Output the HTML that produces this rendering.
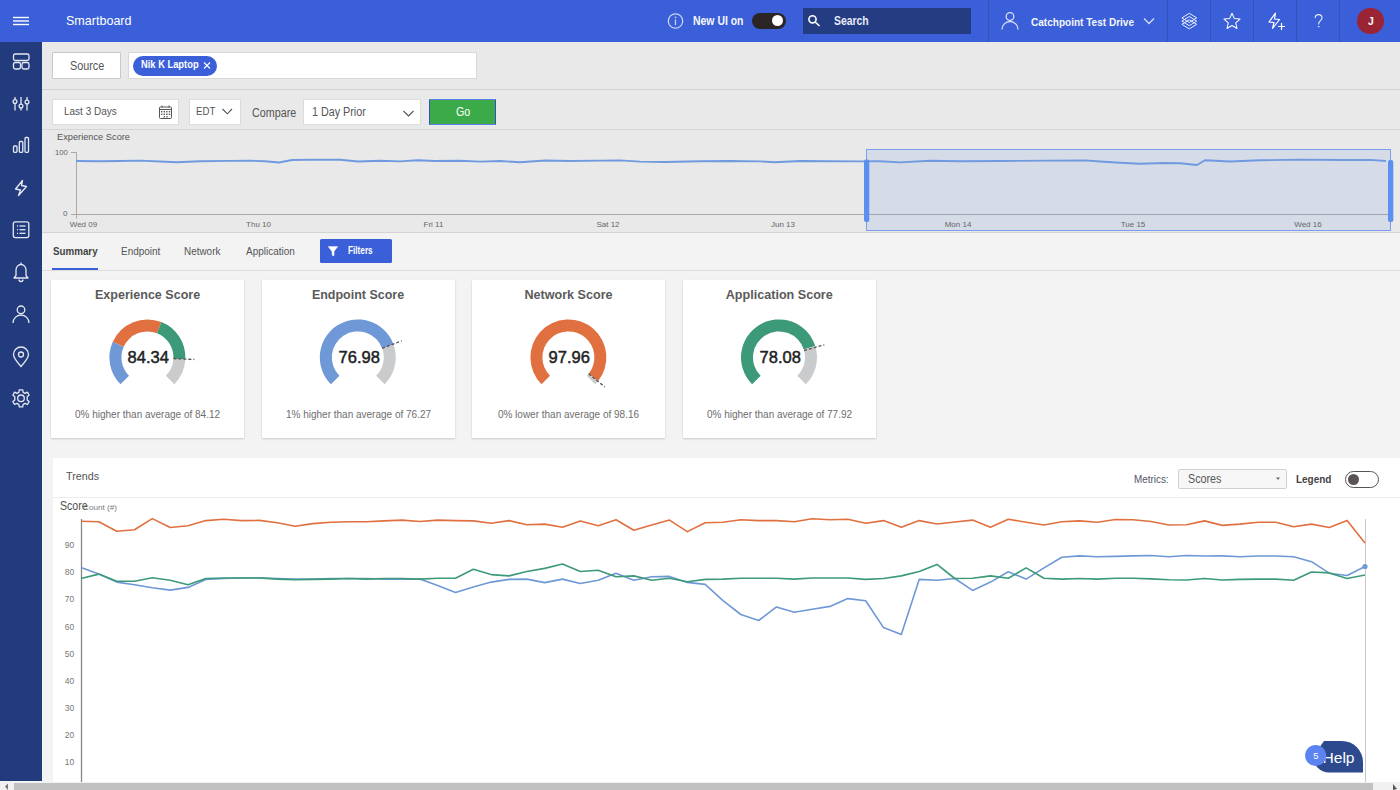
<!DOCTYPE html>
<html><head><meta charset="utf-8"><title>Smartboard</title>
<style>
html,body{margin:0;padding:0;width:1400px;height:790px;overflow:hidden;background:#f2f2f2;font-family:"Liberation Sans",sans-serif;}
.t{position:absolute;white-space:pre;line-height:1;font-family:"Liberation Sans",sans-serif;}
.b{position:absolute;box-sizing:border-box;}
svg{position:absolute;left:0;top:0;overflow:visible;}
</style></head><body>

<!-- header -->
<div class="b" style="left:0;top:0;width:1400px;height:42px;background:#3a5fd8;"></div>
<!-- sidebar -->
<div class="b" style="left:0;top:42px;width:42px;height:739px;background:#213b7d;"></div>
<!-- filter rows -->
<div class="b" style="left:42px;top:42px;width:1358px;height:191px;background:#e9e9e9;"></div>
<div class="b" style="left:42px;top:89px;width:1358px;height:1px;background:#d2d2d2;"></div>
<div class="b" style="left:42px;top:129px;width:1358px;height:1px;background:#d6d6d6;"></div>
<div class="b" style="left:42px;top:232px;width:1358px;height:1px;background:#d4d4d4;"></div>
<!-- tabs -->
<div class="b" style="left:42px;top:233px;width:1358px;height:549px;background:#f3f3f3;"></div>
<div class="b" style="left:42px;top:270px;width:1358px;height:1px;background:#dedede;"></div>
<div class="b" style="left:52px;top:268px;width:46px;height:2px;background:#3a5fd8;"></div>
<div class="b" style="left:319.5px;top:238.5px;width:72.5px;height:24.7px;background:#3a5fd8;border-radius:1.5px;"></div>

<!-- source / input -->
<div class="b" style="left:52px;top:52px;width:69px;height:27px;background:#fff;border:1px solid #c9c9c9;border-radius:1px;"></div>
<div class="b" style="left:128px;top:52px;width:349px;height:27px;background:#fff;border:1px solid #d8d8d8;"></div>
<div class="b" style="left:133px;top:56px;width:84px;height:20px;background:#3a5fd8;border-radius:10px;"></div>
<!-- date row -->
<div class="b" style="left:52px;top:99px;width:127px;height:26px;background:#fff;border:1px solid #dcdcdc;"></div>
<div class="b" style="left:189px;top:99px;width:52px;height:26px;background:#fff;border:1px solid #dcdcdc;"></div>
<div class="b" style="left:303px;top:99px;width:118px;height:26px;background:#fff;border:1px solid #dcdcdc;"></div>
<div class="b" style="left:429px;top:99px;width:67px;height:26px;background:#3aab48;border:1px solid #5b7ee8;border-left-color:#3050c8;border-right-color:#3050c8;border-radius:1px;"></div>

<!-- cards -->
<div class="b" style="left:51px;top:280px;width:193px;height:158px;background:#fff;box-shadow:0 1px 2px rgba(0,0,0,0.18);"></div>
<div class="b" style="left:262px;top:280px;width:193px;height:158px;background:#fff;box-shadow:0 1px 2px rgba(0,0,0,0.18);"></div>
<div class="b" style="left:472px;top:280px;width:193px;height:158px;background:#fff;box-shadow:0 1px 2px rgba(0,0,0,0.18);"></div>
<div class="b" style="left:683px;top:280px;width:193px;height:158px;background:#fff;box-shadow:0 1px 2px rgba(0,0,0,0.18);"></div>

<!-- trends panel -->
<div class="b" style="left:53px;top:458px;width:1347px;height:324px;background:#fff;"></div>
<div class="b" style="left:53px;top:497px;width:1347px;height:1px;background:#ececec;"></div>
<div class="b" style="left:1178px;top:469px;width:109px;height:20px;background:#f7f7f7;border:1px solid #d0d0d0;border-radius:2px;"></div>
<div class="b" style="left:1345px;top:471px;width:34px;height:17px;background:#fff;border:1px solid #555;border-radius:9px;"></div>
<div class="b" style="left:1348px;top:474px;width:11px;height:11px;background:#5a5358;border-radius:50%;"></div>

<!-- search box -->
<div class="b" style="left:803px;top:8px;width:168px;height:26px;background:#233c82;"></div>
<!-- toggle -->
<div class="b" style="left:752px;top:13px;width:34px;height:16px;background:#2b2526;border-radius:8px;"></div>
<div class="b" style="left:772px;top:15px;width:11px;height:11px;background:#fff;border-radius:50%;"></div>
<!-- avatar -->
<div class="b" style="left:1357.3px;top:7.6px;width:26.6px;height:26.6px;background:#9a2433;border-radius:50%;"></div>

<!-- scrollbar -->
<div class="b" style="left:0;top:782px;width:1400px;height:8px;background:#f1f1f1;"></div>
<div class="b" style="left:14px;top:783px;width:1359px;height:7px;background:#c1c1c1;"></div>

<svg width="1400" height="790" viewBox="0 0 1400 790">
  <!-- header icons -->
  <g stroke="#fff" stroke-width="1.4" fill="none">
    <line x1="13" y1="17.5" x2="29" y2="17.5"/><line x1="13" y1="21" x2="29" y2="21"/><line x1="13" y1="24.5" x2="29" y2="24.5"/>
  </g>
  <g stroke="#c9d4f2" stroke-width="1.3" fill="none">
    <circle cx="675.5" cy="21" r="7.2"/>
    <line x1="675.5" y1="19.5" x2="675.5" y2="25"/>
  </g>
  <circle cx="675.5" cy="17.3" r="0.9" fill="#c9d4f2"/>
  <!-- search icon -->
  <g stroke="#fff" stroke-width="1.6" fill="none">
    <circle cx="812.5" cy="19.3" r="3.6"/><line x1="815.2" y1="22" x2="819.5" y2="26"/>
  </g>
  <!-- separators -->
  <g stroke="#3253b8" stroke-width="1">
    <line x1="988.5" y1="0" x2="988.5" y2="42"/><line x1="1167.5" y1="0" x2="1167.5" y2="42"/>
    <line x1="1210.5" y1="0" x2="1210.5" y2="42"/><line x1="1253.5" y1="0" x2="1253.5" y2="42"/>
    <line x1="1296.5" y1="0" x2="1296.5" y2="42"/><line x1="1339.5" y1="0" x2="1339.5" y2="42"/>
  </g>
  <!-- user icon -->
  <g stroke="#d6def5" stroke-width="1.3" fill="none">
    <circle cx="1010" cy="16.5" r="3.8"/>
    <path d="M1002,29.5 A8,8 0 0 1 1018,29.5"/>
    <path d="M1144,18.5 L1149,23.5 L1154,18.5"/>
  </g>
  <!-- layers -->
  <g stroke="#eef1fb" stroke-width="1" fill="none" stroke-linejoin="round">
    <path d="M1189.3,13.3 L1196.7,17.9 L1189.3,22.5 L1181.9,17.9 Z"/>
    <path d="M1189.3,16.5 L1196.7,21.1 L1189.3,25.7 L1181.9,21.1 Z"/>
    <path d="M1189.3,19.7 L1196.7,24.3 L1189.3,28.9 L1181.9,24.3 Z"/>
  </g>
  <!-- star -->
  <path d="M1232,13.3 L1234.3,18.6 L1240,19.1 L1235.7,22.9 L1237,28.5 L1232,25.5 L1227,28.5 L1228.3,22.9 L1224,19.1 L1229.7,18.6 Z" stroke="#fff" stroke-width="1.05" fill="none" stroke-linejoin="round"/>
  <!-- bolt plus -->
  <g stroke="#fff" stroke-width="1.2" fill="none" stroke-linejoin="round">
    <path d="M1275.5,13 L1269,22 L1274,22.5 L1272.5,28.5 L1279.5,19.5 L1274.5,19 Z"/>
    <path d="M1281.5,23 L1281.5,30 M1278,26.5 L1285,26.5"/>
  </g>
  <!-- help ? -->
  <path d="M1315.2,18 C1315.2,15.6 1316.8,14.6 1318.5,14.6 C1320.4,14.6 1322,15.8 1322,18 C1322,20.3 1318.7,21 1318.7,23.6 L1318.7,24.4" stroke="#e8ecf8" stroke-width="1.1" fill="none"/><rect x="1317.9" y="26" width="1.6" height="1.2" fill="#e8ecf8"/>

  <!-- sidebar icons -->
  <g stroke="#e6e9f2" stroke-width="1.3" fill="none">
    <rect x="13.5" y="54" width="15.5" height="6.5" rx="1.8"/>
    <rect x="13.5" y="62.5" width="7" height="6.5" rx="1.8"/>
    <rect x="22" y="62.5" width="7" height="6.5" rx="1.8"/>
    <!-- sliders -->
    <line x1="15" y1="97" x2="15" y2="110.5"/><line x1="21" y1="97" x2="21" y2="110.5"/><line x1="27" y1="97" x2="27" y2="110.5"/>
    <circle cx="15" cy="101.5" r="1.9" fill="#213b7d"/><circle cx="21" cy="106" r="1.9" fill="#213b7d"/><circle cx="27" cy="102" r="1.9" fill="#213b7d"/>
    <!-- bars -->
    <rect x="13.5" y="146" width="3.5" height="6.3" rx="1"/>
    <rect x="19.3" y="141.5" width="3.5" height="10.8" rx="1"/>
    <rect x="25" y="137.5" width="3.5" height="14.8" rx="1"/>
    <!-- bolt -->
    <path d="M22.5,180.5 L15.5,189 L20.5,190 L18.5,195.5 L26.5,186.5 L21.5,185.5 Z" stroke-linejoin="round"/>
    <!-- list -->
    <rect x="13.3" y="221.8" width="15.5" height="15.8" rx="2"/>
    <line x1="17" y1="226" x2="18" y2="226"/><line x1="19.5" y1="226" x2="25.5" y2="226"/>
    <line x1="17" y1="229.7" x2="18" y2="229.7"/><line x1="19.5" y1="229.7" x2="25.5" y2="229.7"/>
    <line x1="17" y1="233.3" x2="18" y2="233.3"/><line x1="19.5" y1="233.3" x2="25.5" y2="233.3"/>
    <!-- bell -->
    <path d="M14,278 L16,275.5 L16,270 A5,5.5 0 0 1 26,270 L26,275.5 L28,278 Z" stroke-linejoin="round"/>
    <path d="M19,279.5 A2,2 0 0 0 23,279.5"/>
    <line x1="21" y1="262.5" x2="21" y2="264.5"/>
    <!-- user -->
    <circle cx="21" cy="309.8" r="3.8"/>
    <path d="M13,323 A8,8 0 0 1 29,323"/>
    <!-- pin -->
    <path d="M21,366.5 C17,362 13.5,357.5 13.5,354.5 A7.5,7.5 0 0 1 28.5,354.5 C28.5,357.5 25,362 21,366.5 Z"/>
    <circle cx="21" cy="354.5" r="2.5"/>
    <!-- gear -->
    <circle cx="21" cy="398.3" r="3.3"/>
    <path d="M19.3,389.8 L22.7,389.8 L23.2,392.3 L25.1,393.3 L27.4,392.1 L29.1,395 L27.2,396.7 L27.2,399.9 L29.1,401.6 L27.4,404.5 L25.1,403.3 L23.2,404.3 L22.7,406.8 L19.3,406.8 L18.8,404.3 L16.9,403.3 L14.6,404.5 L12.9,401.6 L14.8,399.9 L14.8,396.7 L12.9,395 L14.6,392.1 L16.9,393.3 L18.8,392.3 Z" stroke-linejoin="round"/>
  </g>

  <!-- chip x -->
  <g stroke="#fff" stroke-width="1.1"><line x1="204" y1="62.5" x2="210" y2="68.5"/><line x1="210" y1="62.5" x2="204" y2="68.5"/></g>
  <!-- calendar icon -->
  <g stroke="#555" stroke-width="1" fill="none">
    <rect x="159.5" y="107" width="12" height="11.5" rx="1"/>
    <line x1="159.5" y1="109.5" x2="171.5" y2="109.5"/>
    <line x1="162" y1="105.5" x2="162" y2="107.5"/><line x1="169" y1="105.5" x2="169" y2="107.5"/>
  </g>
  <g fill="#555">
    <rect x="161" y="111" width="1.4" height="1.4"/><rect x="163.6" y="111" width="1.4" height="1.4"/><rect x="166.2" y="111" width="1.4" height="1.4"/><rect x="168.8" y="111" width="1.4" height="1.4"/>
    <rect x="161" y="113.6" width="1.4" height="1.4"/><rect x="163.6" y="113.6" width="1.4" height="1.4"/><rect x="166.2" y="113.6" width="1.4" height="1.4"/><rect x="168.8" y="113.6" width="1.4" height="1.4"/>
    <rect x="163.6" y="116.1" width="1.4" height="1.4"/><rect x="166.2" y="116.1" width="1.4" height="1.4"/>
  </g>
  <g stroke="#555" stroke-width="1.1" fill="none">
    <path d="M222.5,109 L227.3,113.8 L232,109"/>
    <path d="M403.5,111 L408.5,116 L413.5,111"/>
  </g>
  <!-- filters funnel -->
  <path d="M328.2,246.6 L337.8,246.6 L334.2,251.2 L334,255.8 L332.3,255.5 L331.8,251.2 Z" fill="#fff" stroke="#fff" stroke-width="0.4" stroke-linejoin="round"/>
  <!-- dropdown caret -->
  <path d="M1276,477.5 L1280,477.5 L1278,480 Z" fill="#666"/>

  <!-- mini chart -->
  <g stroke="#a8a8a8" stroke-width="1" fill="none">
    <line x1="76.5" y1="152.5" x2="76.5" y2="218.5"/>
    <line x1="71" y1="152.5" x2="76.5" y2="152.5"/>
    <line x1="71" y1="214.5" x2="1390" y2="214.5"/>
  </g>
  <rect x="866.5" y="149.5" width="524" height="81" fill="rgba(120,150,230,0.16)" stroke="#7a9df0" stroke-width="1"/>
  <polyline points="76,161 100,161.3 120,161 140,160.6 160,161.5 177,162.3 200,161.2 230,160.9 250,160.7 265,161.2 279,162.5 292,160 320,159.6 340,159.8 358,161.5 380,160.8 400,161.4 418,160.3 435,161 460,160.8 480,161.6 500,161 520,162.2 545,160.5 570,161 600,160.6 620,160.4 640,161.6 665,162 700,161.3 730,161 760,161.4 775,162.3 800,161 830,161.2 860,161.4 880,161.2 900,162.4 930,160.8 960,161.2 1000,161 1050,160.6 1085,160.4 1100,161.5 1120,162.8 1140,163.8 1165,163 1180,163.2 1197,165 1205,160.2 1230,161.5 1260,160.3 1300,159.6 1340,160 1370,159.9 1386,161" fill="none" stroke="#6f9ae0" stroke-width="1.9" stroke-linejoin="round"/>
  <rect x="864" y="159.5" width="5.3" height="62.5" rx="2" fill="#5b8ff0"/>
  <rect x="1388" y="160" width="5.3" height="62" rx="2" fill="#5b8ff0"/>

  <path d="M120.53,384.27 A38,38 0 0 1 112.77,341.76 L123.70,346.70 A26,26 0 0 0 129.02,375.78 Z" fill="#6e98d6"/>
<path d="M112.77,341.76 A38,38 0 0 1 161.45,322.09 L157.01,333.24 A26,26 0 0 0 123.70,346.70 Z" fill="#e07040"/>
<path d="M161.45,322.09 A38,38 0 0 1 185.35,359.26 L173.37,358.67 A26,26 0 0 0 157.01,333.24 Z" fill="#3c9a78"/>
<path d="M185.35,359.26 A38,38 0 0 1 174.27,384.27 L165.78,375.78 A26,26 0 0 0 173.37,358.67 Z" fill="#c9cbcc"/>
<line x1="173.4" y1="358.6" x2="194.4" y2="359.5" stroke="#555" stroke-width="1.3" stroke-dasharray="3,2"/>
<path d="M330.93,384.27 A38,38 0 1 1 393.51,344.40 L382.23,348.51 A26,26 0 1 0 339.42,375.78 Z" fill="#6e98d6"/>
<path d="M393.51,344.40 A38,38 0 0 1 384.67,384.27 L376.18,375.78 A26,26 0 0 0 382.23,348.51 Z" fill="#c9cbcc"/>
<line x1="382.2" y1="348.3" x2="401.8" y2="340.9" stroke="#555" stroke-width="1.3" stroke-dasharray="3,2"/>
<path d="M541.53,384.27 A38,38 0 1 1 597.93,381.31 L588.61,373.76 A26,26 0 1 0 550.02,375.78 Z" fill="#e07040"/>
<path d="M597.93,381.31 A38,38 0 0 1 595.27,384.27 L586.78,375.78 A26,26 0 0 0 588.61,373.76 Z" fill="#c9cbcc"/>
<line x1="588.6" y1="373.8" x2="604.9" y2="387.0" stroke="#555" stroke-width="1.3" stroke-dasharray="3,2"/>
<path d="M752.13,384.27 A38,38 0 1 1 815.24,345.97 L803.80,349.58 A26,26 0 1 0 760.62,375.78 Z" fill="#3c9a78"/>
<path d="M815.24,345.97 A38,38 0 0 1 805.87,384.27 L797.38,375.78 A26,26 0 0 0 803.80,349.58 Z" fill="#c9cbcc"/>
<line x1="804.1" y1="350.5" x2="824.3" y2="344.8" stroke="#555" stroke-width="1.3" stroke-dasharray="3,2"/>

  <!-- trends chart -->
  <line x1="81.5" y1="519" x2="81.5" y2="782" stroke="#888" stroke-width="1.3"/>
  <line x1="1365.5" y1="519" x2="1365.5" y2="782" stroke="#c8c8c8" stroke-width="1"/>
  <polyline points="81.0,521.3 98.8,521.8 116.7,531.2 134.5,529.8 152.3,518.6 170.2,527.5 188.0,525.7 205.8,520.6 223.7,519.2 241.5,520.6 259.3,520.4 277.2,522.7 295.0,526.3 312.8,523.6 330.7,522.2 348.5,521.8 366.3,521.8 384.2,520.9 402.0,520.1 419.8,521.5 437.7,520.1 455.5,520.6 473.3,520.9 491.2,523.3 509.0,520.6 526.8,524.8 544.7,524.1 562.5,527.2 580.3,520.9 598.2,525.7 616.0,519.7 633.8,530.2 651.7,525.0 669.5,520.1 687.3,531.6 705.2,522.7 723.0,522.2 740.8,519.7 758.7,520.6 776.5,520.6 794.3,521.8 812.2,518.8 830.0,519.7 847.8,519.2 865.7,523.3 883.5,520.6 901.3,527.2 919.2,520.6 937.0,524.0 954.8,522.0 972.6,520.1 990.5,527.2 1008.3,519.2 1026.1,522.2 1044.0,525.0 1061.8,521.8 1079.6,520.9 1097.5,522.2 1115.3,519.5 1133.1,519.7 1151.0,521.5 1168.8,525.0 1186.6,524.8 1204.5,520.9 1222.3,525.4 1240.1,524.1 1258.0,522.2 1275.8,522.2 1293.6,526.8 1311.5,524.1 1329.3,527.5 1347.1,520.4 1365.0,543.1" fill="none" stroke="#e07040" stroke-width="1.6" stroke-linejoin="round"/>
  <polyline points="81.0,567.6 98.8,574.1 116.7,582.1 134.5,584.7 152.3,587.8 170.2,590.1 188.0,587.4 205.8,579.4 223.7,578.5 241.5,578.0 259.3,577.7 277.2,578.5 295.0,579.1 312.8,579.1 330.7,578.5 348.5,578.5 366.3,578.5 384.2,579.1 402.0,579.1 419.8,579.1 437.7,585.6 455.5,592.4 473.3,586.9 491.2,582.1 509.0,579.4 526.8,579.1 544.7,582.6 562.5,579.1 580.3,583.5 598.2,580.3 616.0,573.2 633.8,580.3 651.7,576.8 669.5,576.4 687.3,582.4 705.2,584.4 723.0,600.7 740.8,614.5 758.7,620.5 776.5,606.9 794.3,612.2 812.2,609.2 830.0,606.4 847.8,598.6 865.7,600.7 883.5,627.6 901.3,634.4 919.2,579.4 937.0,580.3 954.8,578.5 972.6,590.4 990.5,582.1 1008.3,571.8 1026.1,579.1 1044.0,567.9 1061.8,557.3 1079.6,555.9 1097.5,556.7 1115.3,556.4 1133.1,555.9 1151.0,555.5 1168.8,556.7 1186.6,555.5 1204.5,556.0 1222.3,555.9 1240.1,556.7 1258.0,556.0 1275.8,556.0 1293.6,556.7 1311.5,561.7 1329.3,573.2 1347.1,575.5 1365.0,566.5" fill="none" stroke="#6e98d6" stroke-width="1.6" stroke-linejoin="round"/>
  <polyline points="81.0,578.5 98.8,574.1 116.7,581.2 134.5,581.2 152.3,577.7 170.2,580.3 188.0,584.7 205.8,578.5 223.7,578.0 241.5,578.0 259.3,578.0 277.2,579.1 295.0,579.8 312.8,579.4 330.7,579.1 348.5,578.5 366.3,579.1 384.2,578.5 402.0,578.5 419.8,579.1 437.7,578.2 455.5,578.2 473.3,569.3 491.2,574.6 509.0,575.9 526.8,571.5 544.7,568.4 562.5,564.0 580.3,571.5 598.2,570.2 616.0,576.8 633.8,575.9 651.7,580.3 669.5,578.2 687.3,581.7 705.2,579.4 723.0,579.1 740.8,578.2 758.7,578.2 776.5,578.2 794.3,579.1 812.2,578.0 830.0,578.0 847.8,578.0 865.7,579.4 883.5,578.5 901.3,575.9 919.2,571.5 937.0,564.4 954.8,578.5 972.6,578.2 990.5,575.9 1008.3,578.2 1026.1,567.9 1044.0,578.2 1061.8,579.1 1079.6,578.5 1097.5,579.1 1115.3,578.2 1133.1,578.2 1151.0,578.9 1168.8,579.8 1186.6,580.0 1204.5,578.5 1222.3,580.0 1240.1,579.4 1258.0,579.1 1275.8,579.1 1293.6,580.3 1311.5,572.0 1329.3,572.9 1347.1,578.5 1365.0,575.0" fill="none" stroke="#3c9a78" stroke-width="1.6" stroke-linejoin="round"/>
  <circle cx="1365" cy="566.5" r="2.6" fill="#6e98d6"/>

  <!-- help button -->
  <path d="M1324,741 L1342,741 A21,21 0 0 1 1363,762 L1363,772.5 L1329,772.5 A16,16 0 0 1 1313,756.5 Z" fill="#2d4a8f"/>
  <text x="1322.5" y="763" font-family="Liberation Sans" font-size="15.5" fill="#fff" textLength="32" lengthAdjust="spacingAndGlyphs">Help</text>
  <circle cx="1315.7" cy="755.5" r="10.6" fill="#5b84f0"/>
  <text x="1315.8" y="758.8" font-family="Liberation Sans" font-size="9.5" font-weight="400" fill="#fff" text-anchor="middle">5</text>
  <path d="M5,786.5 L8,783.5 L8,790 Z" fill="#777"/><path d="M1393,784 L1397,789 L1393,790 Z" fill="#555"/>
</svg>

<span class="t" style="top:13.95px;font-size:13px;font-weight:400;color:#ffffff;left:66.00px;transform:scaleX(0.9643);transform-origin:left 0;">Smartboard</span>
<span class="t" style="top:15.40px;font-size:12px;font-weight:700;color:#f6f7fc;left:692.50px;transform:scaleX(0.8705);transform-origin:left 0;">New UI on</span>
<span class="t" style="top:14.80px;font-size:12px;font-weight:700;color:#e8ecf8;left:834.00px;transform:scaleX(0.8668);transform-origin:left 0;">Search</span>
<span class="t" style="top:15.54px;font-size:11.6px;font-weight:700;color:#f4f6fc;left:1031.40px;transform:scaleX(0.8658);transform-origin:left 0;">Catchpoint Test Drive</span>
<span class="t" style="top:16.08px;font-size:10.5px;font-weight:700;color:#ffffff;left:1367.50px;transform:scaleX(0.9925);transform-origin:left 0;">J</span>
<span class="t" style="top:60.10px;font-size:12px;font-weight:400;color:#555555;left:69.60px;transform:scaleX(0.9019);transform-origin:left 0;">Source</span>
<span class="t" style="top:59.25px;font-size:11px;font-weight:700;color:#ffffff;left:141.00px;transform:scaleX(0.8490);transform-origin:left 0;">Nik K Laptop</span>
<span class="t" style="top:106.35px;font-size:11px;font-weight:400;color:#555555;left:64.30px;transform:scaleX(0.9089);transform-origin:left 0;">Last 3 Days</span>
<span class="t" style="top:106.35px;font-size:11px;font-weight:400;color:#555555;left:196.40px;transform:scaleX(0.8773);transform-origin:left 0;">EDT</span>
<span class="t" style="top:107.10px;font-size:12px;font-weight:400;color:#555555;left:251.50px;transform:scaleX(0.8955);transform-origin:left 0;">Compare</span>
<span class="t" style="top:106.20px;font-size:12px;font-weight:400;color:#555555;left:311.50px;transform:scaleX(0.8962);transform-origin:left 0;">1 Day Prior</span>
<span class="t" style="top:106.10px;font-size:12px;font-weight:400;color:#ffffff;left:455.80px;transform:scaleX(0.8929);transform-origin:left 0;">Go</span>
<span class="t" style="top:132.35px;font-size:9.7px;font-weight:400;color:#555555;left:56.50px;transform:scaleX(0.9546);transform-origin:left 0;">Experience Score</span>
<span class="t" style="top:148.50px;font-size:8px;font-weight:400;color:#666666;left:55.00px;transform:scaleX(0.9656);transform-origin:left 0;">100</span>
<span class="t" style="top:210.40px;font-size:8px;font-weight:400;color:#666666;left:63.00px;transform:scaleX(1.0105);transform-origin:left 0;">0</span>
<span class="t" style="top:220.50px;font-size:8px;font-weight:400;color:#666666;left:69.78px;">Wed 09</span>
<span class="t" style="top:220.50px;font-size:8px;font-weight:400;color:#666666;left:246.05px;">Thu 10</span>
<span class="t" style="top:220.50px;font-size:8px;font-weight:400;color:#666666;left:423.57px;">Fri 11</span>
<span class="t" style="top:220.50px;font-size:8px;font-weight:400;color:#666666;left:596.43px;">Sat 12</span>
<span class="t" style="top:220.50px;font-size:8px;font-weight:400;color:#666666;left:770.98px;">Jun 13</span>
<span class="t" style="top:220.50px;font-size:8px;font-weight:400;color:#666666;left:944.66px;">Mon 14</span>
<span class="t" style="top:220.50px;font-size:8px;font-weight:400;color:#666666;left:1120.70px;">Tue 15</span>
<span class="t" style="top:220.50px;font-size:8px;font-weight:400;color:#666666;left:1294.28px;">Wed 16</span>
<span class="t" style="top:245.75px;font-size:11px;font-weight:700;color:#444444;left:53.30px;transform:scaleX(0.8895);transform-origin:left 0;">Summary</span>
<span class="t" style="top:245.75px;font-size:11px;font-weight:400;color:#555555;left:120.70px;transform:scaleX(0.9047);transform-origin:left 0;">Endpoint</span>
<span class="t" style="top:245.75px;font-size:11px;font-weight:400;color:#555555;left:184.30px;transform:scaleX(0.9022);transform-origin:left 0;">Network</span>
<span class="t" style="top:245.75px;font-size:11px;font-weight:400;color:#555555;left:245.70px;transform:scaleX(0.9066);transform-origin:left 0;">Application</span>
<span class="t" style="top:245.84px;font-size:10.3px;font-weight:700;color:#ffffff;left:348.30px;transform:scaleX(0.7992);transform-origin:left 0;">Filters</span>
<span class="t" style="top:288.35px;font-size:13px;font-weight:700;color:#5a5a5a;left:92.94px;transform:scaleX(0.9640);transform-origin:center 0;">Experience Score</span>
<span class="t" style="top:349.25px;font-size:17px;font-weight:400;color:#222222;left:126.53px;-webkit-text-stroke:0.5px #222222;transform:scaleX(0.9707);transform-origin:center 0;">84.34</span>
<span class="t" style="top:409.80px;font-size:10px;font-weight:400;color:#6e6e6e;left:74.95px;">0% higher than average of 84.12</span>
<span class="t" style="top:288.35px;font-size:13px;font-weight:700;color:#5a5a5a;left:310.47px;transform:scaleX(0.9598);transform-origin:center 0;">Endpoint Score</span>
<span class="t" style="top:349.25px;font-size:17px;font-weight:400;color:#222222;left:337.53px;-webkit-text-stroke:0.5px #222222;transform:scaleX(0.9707);transform-origin:center 0;">76.98</span>
<span class="t" style="top:409.80px;font-size:10px;font-weight:400;color:#6e6e6e;left:285.95px;">1% higher than average of 76.27</span>
<span class="t" style="top:288.35px;font-size:13px;font-weight:700;color:#5a5a5a;left:522.98px;transform:scaleX(0.9687);transform-origin:center 0;">Network Score</span>
<span class="t" style="top:349.25px;font-size:17px;font-weight:400;color:#222222;left:547.53px;-webkit-text-stroke:0.5px #222222;transform:scaleX(0.9707);transform-origin:center 0;">97.96</span>
<span class="t" style="top:409.80px;font-size:10px;font-weight:400;color:#6e6e6e;left:497.89px;">0% lower than average of 98.16</span>
<span class="t" style="top:288.35px;font-size:13px;font-weight:700;color:#5a5a5a;left:724.23px;transform:scaleX(0.9681);transform-origin:center 0;">Application Score</span>
<span class="t" style="top:349.25px;font-size:17px;font-weight:400;color:#222222;left:758.53px;-webkit-text-stroke:0.5px #222222;transform:scaleX(0.9707);transform-origin:center 0;">78.08</span>
<span class="t" style="top:409.80px;font-size:10px;font-weight:400;color:#6e6e6e;left:706.95px;">0% higher than average of 77.92</span>
<span class="t" style="top:471.03px;font-size:11.5px;font-weight:400;color:#555555;left:65.50px;transform:scaleX(0.9329);transform-origin:left 0;">Trends</span>
<span class="t" style="top:473.65px;font-size:11px;font-weight:400;color:#555566;left:1134.40px;transform:scaleX(0.8987);transform-origin:left 0;">Metrics:</span>
<span class="t" style="top:472.80px;font-size:12px;font-weight:400;color:#555555;left:1187.60px;transform:scaleX(0.8940);transform-origin:left 0;">Scores</span>
<span class="t" style="top:473.65px;font-size:11px;font-weight:700;color:#444444;left:1296.00px;transform:scaleX(0.9048);transform-origin:left 0;">Legend</span>
<span class="t" style="top:499.50px;font-size:12px;font-weight:400;color:#4e4e4e;left:60.10px;transform:scaleX(0.8833);transform-origin:left 0;">Score</span>
<span class="t" style="top:503.50px;font-size:8px;font-weight:400;color:#7a7a7a;left:82.80px;transform:scaleX(1.0192);transform-origin:left 0;">Count (#)</span>
<span class="t" style="top:541.17px;font-size:8.5px;font-weight:400;color:#777777;left:64.83px;">90</span>
<span class="t" style="top:568.32px;font-size:8.5px;font-weight:400;color:#777777;left:64.83px;">80</span>
<span class="t" style="top:595.47px;font-size:8.5px;font-weight:400;color:#777777;left:64.83px;">70</span>
<span class="t" style="top:622.62px;font-size:8.5px;font-weight:400;color:#777777;left:64.83px;">60</span>
<span class="t" style="top:649.77px;font-size:8.5px;font-weight:400;color:#777777;left:64.83px;">50</span>
<span class="t" style="top:676.92px;font-size:8.5px;font-weight:400;color:#777777;left:64.83px;">40</span>
<span class="t" style="top:704.07px;font-size:8.5px;font-weight:400;color:#777777;left:64.83px;">30</span>
<span class="t" style="top:731.22px;font-size:8.5px;font-weight:400;color:#777777;left:64.83px;">20</span>
<span class="t" style="top:758.38px;font-size:8.5px;font-weight:400;color:#777777;left:64.83px;">10</span>

</body></html>
